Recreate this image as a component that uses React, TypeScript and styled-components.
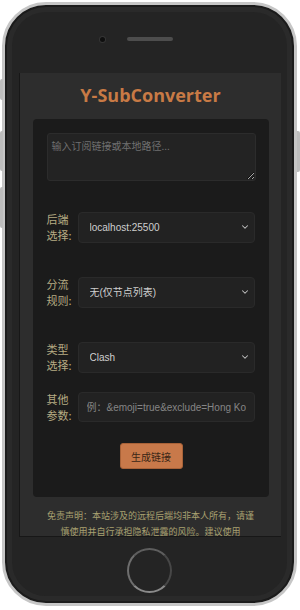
import React from "react";
import styled, { createGlobalStyle } from "styled-components";
import { ChevronDown } from "lucide-react";

const Global = createGlobalStyle`
  html, body { margin: 0; padding: 0; background: #ffffff; }
  body { font-family: "Noto Sans", "Noto Sans CJK SC", sans-serif; }
  * { box-sizing: border-box; }
`;

const Stage = styled.div`
  padding: 2px 0 0 2px;
`;

const Phone = styled.div`
  position: relative;
  width: 295px;
  height: 604px;
  border: 3px solid #c6c6c6;
  border-radius: 44px;
  background: #242424;
  box-shadow: inset 0 0 0 2px #1b1b1b, inset 0 0 0 7px #2a2a2a;
  display: flex;
  flex-direction: column;
`;

const SideKey = styled.div<{ $side: "left" | "right"; $top: number; $h: number }>`
  position: absolute;
  ${(p) => (p.$side === "left" ? "left: -5px;" : "right: -6px;")}
  top: ${(p) => p.$top}px;
  width: 3px;
  height: ${(p) => p.$h}px;
  background: #bdbdbd;
  border-radius: ${(p) => (p.$side === "left" ? "2px 0 0 2px" : "0 2px 2px 0")};
`;

const TopBezel = styled.div`
  height: 68px;
  flex-shrink: 0;
  display: grid;
  grid-template-columns: 1fr auto 1fr;
  align-items: center;
`;

const Camera = styled.div`
  justify-self: end;
  margin-right: 22px;
  width: 5px;
  height: 5px;
  border-radius: 50%;
  background: #0f0f0f;
  box-shadow: 0 0 0 1px #353535;
`;

const Speaker = styled.div`
  width: 46px;
  height: 4px;
  border-radius: 2px;
  background: #4d4d4d;
`;

const Screen = styled.div`
  margin-left: 14px;
  width: 262px;
  height: 464px;
  flex-shrink: 0;
  background: #2d2d2d;
  border-left: 1px solid #171717;
  border-bottom: 1px solid #171717;
  overflow: hidden;
  display: flex;
  flex-direction: column;
  align-items: center;
`;

const Title = styled.h1`
  margin: 10px 0 12px;
  font-family: "Open Sans", "Noto Sans", sans-serif;
  font-weight: 700;
  font-size: 18px;
  line-height: 24px;
  color: #c87a45;
`;

const Card = styled.div`
  width: 236px;
  flex-shrink: 0;
  background: #1b1b1b;
  border-radius: 4px;
  padding: 14px 13px 28px 14px;
  display: flex;
  flex-direction: column;
`;

const TextArea = styled.textarea`
  width: 209px;
  height: 48px;
  background: #232323;
  border: 1px solid #2c2c2c;
  border-radius: 3px;
  padding: 5px 4px;
  color: #ccc;
  font-family: "Noto Sans CJK SC", sans-serif;
  font-size: 10px;
  line-height: 14px;
  outline: none;
  &::placeholder { color: #707070; }
`;

const Row = styled.div<{ $mt: number }>`
  margin-top: ${(p) => p.$mt}px;
  display: flex;
  align-items: center;
`;

const Label = styled.label`
  width: 26px;
  margin-right: 5px;
  flex-shrink: 0;
  font-family: "Noto Sans CJK SC", sans-serif;
  font-size: 11px;
  line-height: 16px;
  color: #b6ab83;
`;

const SelectWrap = styled.div`
  position: relative;
  width: 177px;
`;

const Select = styled.select`
  appearance: none;
  width: 100%;
  height: 31px;
  background: #222222;
  border: 1px solid #2a2a2a;
  border-radius: 4px;
  padding: 0 20px 0 11px;
  color: #cfcfcf;
  font-family: "Liberation Sans", "Noto Sans CJK SC", sans-serif;
  font-size: 10px;
  outline: none;
`;

const Chevron = styled(ChevronDown)`
  position: absolute;
  right: 5px;
  top: 50%;
  transform: translateY(-50%);
  pointer-events: none;
  color: #c4c4c4;
`;

const Input = styled.input`
  width: 177px;
  height: 30px;
  background: #222222;
  border: 1px solid #2a2a2a;
  border-radius: 4px;
  padding: 0 8px;
  color: #cfcfcf;
  font-family: "Liberation Sans", "Noto Sans CJK SC", sans-serif;
  font-size: 10px;
  outline: none;
  &::placeholder { color: #858585; }
`;

const Button = styled.button`
  align-self: center;
  margin-top: 20px;
  width: 63px;
  height: 26px;
  background: #c8794a;
  border: 1px solid #a86238;
  border-radius: 3px;
  color: #3a2616;
  font-family: "Noto Sans CJK SC", sans-serif;
  font-size: 10px;
  padding: 0;
`;

const Disclaimer = styled.p`
  margin: 11px 0 0;
  width: 210px;
  flex-shrink: 0;
  text-align: center;
  font-family: "Noto Sans CJK SC", sans-serif;
  font-size: 9px;
  line-height: 16px;
  color: #a8a070;
`;

const BottomBezel = styled.div`
  flex: 1;
  display: flex;
  align-items: center;
  justify-content: center;
`;

const HomeButton = styled.div`
  width: 45px;
  height: 45px;
  border-radius: 50%;
  border: 2px solid;
  border-color: #5e5e5e #474747 #8a8a8a #6e6e6e;
  background: #242424;
`;

export default function App() {
  return (
    <>
      <Global />
      <Stage>
        <Phone>
          <SideKey $side="left" $top={74} $h={21} />
          <SideKey $side="left" $top={126} $h={40} />
          <SideKey $side="left" $top={182} $h={41} />
          <SideKey $side="right" $top={126} $h={41} />
          <TopBezel>
            <Camera />
            <Speaker />
            <span />
          </TopBezel>
          <Screen>
            <Title>Y-SubConverter</Title>
            <Card>
              <TextArea placeholder="输入订阅链接或本地路径..." />
              <Row $mt={30}>
                <Label>后端选择:</Label>
                <SelectWrap>
                  <Select defaultValue="local">
                    <option value="local">localhost:25500</option>
                  </Select>
                  <Chevron size={10} strokeWidth={2.5} />
                </SelectWrap>
              </Row>
              <Row $mt={33}>
                <Label>分流规则:</Label>
                <SelectWrap>
                  <Select defaultValue="none">
                    <option value="none">无(仅节点列表)</option>
                  </Select>
                  <Chevron size={10} strokeWidth={2.5} />
                </SelectWrap>
              </Row>
              <Row $mt={33}>
                <Label>类型选择:</Label>
                <SelectWrap>
                  <Select defaultValue="clash">
                    <option value="clash">Clash</option>
                  </Select>
                  <Chevron size={10} strokeWidth={2.5} />
                </SelectWrap>
              </Row>
              <Row $mt={18}>
                <Label>其他参数:</Label>
                <Input placeholder="例：&emoji=true&exclude=Hong Kong" />
              </Row>
              <Button>生成链接</Button>
            </Card>
            <Disclaimer>
              免责声明：本站涉及的远程后端均非本人所有，请谨慎使用并自行承担隐私泄露的风险。建议使用 subconverter 自建后端。
            </Disclaimer>
          </Screen>
          <BottomBezel>
            <HomeButton />
          </BottomBezel>
        </Phone>
      </Stage>
    </>
  );
}
